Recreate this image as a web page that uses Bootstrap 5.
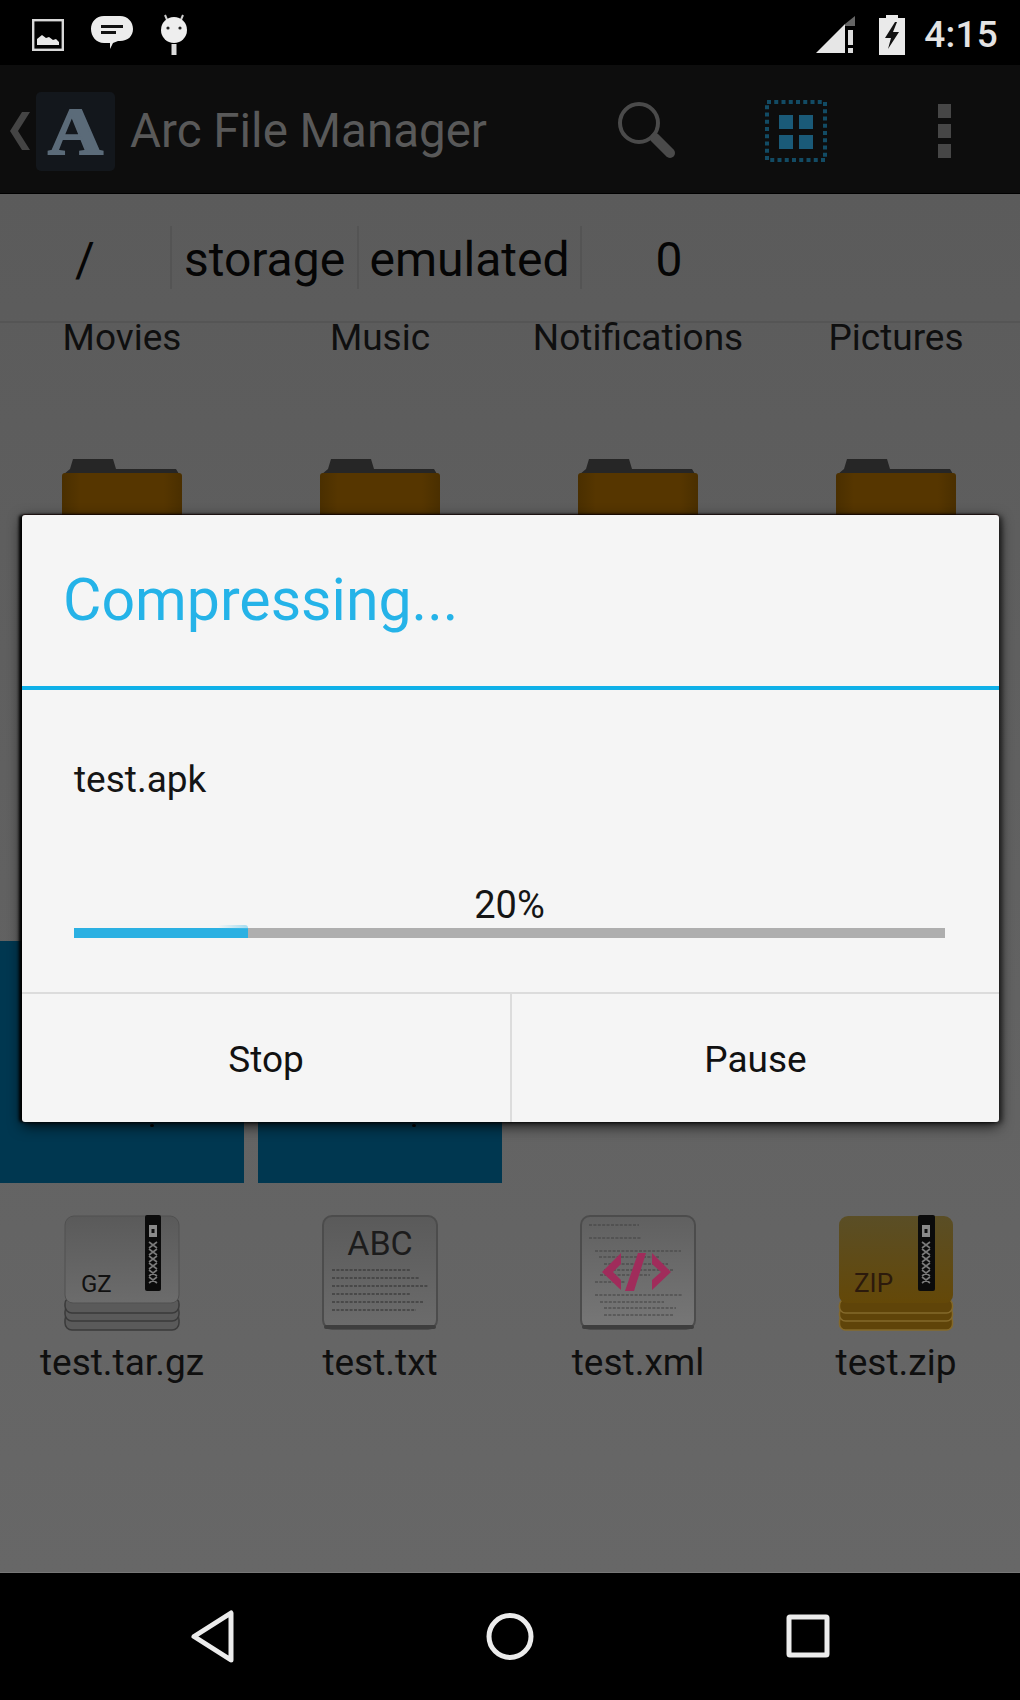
<!doctype html>
<html lang="en">
<head>
<meta charset="utf-8">
<title>Arc File Manager</title>
<link href="https://cdn.jsdelivr.net/npm/bootstrap@5.3.0/dist/css/bootstrap.min.css" rel="stylesheet">
<style>
html,body{margin:0;background:#000}
body{font-family:Roboto,"Liberation Sans",sans-serif}
.phone{width:1020px;height:1700px;overflow:hidden;background:#000}
.statusbar{height:65px;background:#000;padding:4px 22px 0 32px;flex:none}
.statusbar svg{display:block}
.st-chat{margin-left:26px}
.st-droid{margin-left:25px}
.st-batt{margin-left:20px}
.st-signal{margin-right:3px}
.clock{font-size:37px;font-weight:500;color:#e4e4e4;line-height:1;margin-left:19px;letter-spacing:.2px}
.actionbar{height:128px;background:#0d0d0d;flex:none;padding-top:4px}
.logo-tile{width:79px;height:79px;background:#13171c;border-radius:5px;margin-left:6px;color:#5b6b79;font-family:"Liberation Serif",serif;font-weight:700;font-size:68px;line-height:78px;text-align:center;-webkit-text-stroke:2px #5b6b79}
.logo-glyph{display:inline-block;transform:scaleX(1.12)}
.app-title{font-size:47.5px;color:#595959;line-height:1;margin-left:15px;margin-top:2px}
.chev{margin-left:10px}
.act-search{margin-left:130px}
.act-grid{margin-left:88px}
.act-more{margin-left:111px}
.screen{height:1379px;background:linear-gradient(#5b5b5b,#676767);border-top:1px solid #000;overflow:hidden}
.crumbs{height:129px;border-bottom:2px solid #555;padding-top:32px;font-size:48px;color:#050505}
.crumb{height:63px;line-height:67px;text-align:center;border-right:2px solid #545454;flex:none}
.crumb:last-child{border-right:0}
.c1{width:172px}.c2{width:187px}.c3{width:223px}.c4{width:174px}
.file-grid{display:grid;grid-template-columns:repeat(4,244px);column-gap:14px;row-gap:14px}
.cell{height:242px;display:flex;flex-direction:column;align-items:center;position:relative;font-size:37px;color:#0f0f0f;line-height:40px}
.cell-top{height:92px;justify-content:flex-start;line-height:30px}
.cell-top span{white-space:nowrap}
.cell-folder{padding-top:30px}
.cell-file{padding-top:18px}
.cell-file .fname{margin-top:12px}
.cell-on{background:#003750}
.speck{position:absolute;top:183px;width:4px;height:3px;background:#000;border-radius:50%}
.s1{left:150px}.s2{left:154px}
.navbar-sys{height:128px;background:#000;border-top:1px solid #777;flex:none}
.dialog-wrap{position:absolute;left:22px;top:515px;width:977px;height:607px;background:#f5f5f5;border-radius:3px;box-shadow:-3px 0 3px #000,0 4px 14px rgba(0,0,0,.75),3px 1px 5px rgba(0,0,0,.5),0 -1px 1px rgba(40,0,0,.6)}
.dlg-title{height:175px;padding-left:41px;padding-top:45px;font-size:59px;line-height:80px;color:#25b3e8;border-bottom:4px solid #0fb0e8}
.dlg-body{height:304px;padding:68px 54px 0 52px;font-size:37px;color:#151515;line-height:44px;border-bottom:2px solid #dcdcdc}
.pct{margin-top:81px;text-align:center;line-height:44px;height:44px;font-size:38px}
.bar-track{height:10px;border-radius:0;background:#aeaeae;margin-top:1px;overflow:visible}
.bar-fill{background:#2bb0e2;overflow:visible;position:relative}
.bar-fill::after{content:"";position:absolute;right:0;top:-3px;width:30px;height:4px;background:linear-gradient(90deg,rgba(43,176,226,0),rgba(80,195,235,.5));border-radius:3px 3px 0 0}
.dlg-btn{flex:1 1 0;height:128px;border:0;border-radius:0;font-size:37px;color:#111;background:transparent;line-height:1;padding-top:8px}
.dlg-btn:first-child{flex:0 0 490px;border-right:2px solid #dcdcdc}
</style>
</head>
<body>
<div class="phone position-relative d-flex flex-column">

  <div class="statusbar d-flex align-items-center">
    <svg width="32" height="32" viewBox="0 0 32 32"><rect x="1.2" y="1.2" width="29.6" height="29.6" fill="none" stroke="#d8d8d8" stroke-width="2.4"/><path d="M5 26V20l5-4 4 3 3-1 4 3 3-1 3 3v3z" fill="#e8e8e8"/></svg>
    <svg class="st-chat" width="44" height="40" viewBox="0 0 44 40"><path d="M14 1h16c8 0 13 6 13 13s-5 12-13 12h-2l-5 2-3 6v-6H14C6 28 1 21 1 14S6 1 14 1z" fill="#ececec"/><rect x="11" y="10" width="22" height="3" fill="#111"/><rect x="11" y="16" width="15" height="3" fill="#111"/></svg>
    <svg class="st-droid" width="30" height="42" viewBox="0 0 30 42"><path d="M6 1l3 7M24 1l-3 7" stroke="#ccc" stroke-width="2"/><circle cx="15" cy="16" r="13" fill="#eee"/><circle cx="9" cy="14" r="1.6" fill="#222"/><circle cx="21" cy="14" r="1.6" fill="#222"/><rect x="12.5" y="30" width="5" height="11" fill="#ddd"/></svg>
    <div class="flex-grow-1"></div>
    <svg class="st-signal" width="40" height="38" viewBox="0 0 40 38"><path d="M0 37L29 8v29z" fill="#e6e6e6"/><path d="M29 8L39 0v10H29z" fill="#666"/><rect x="32" y="14" width="5" height="15" fill="#ddd"/><rect x="32" y="32" width="5" height="5" fill="#ddd"/></svg>
    <svg class="st-batt" width="26" height="40" viewBox="0 0 26 40"><path d="M7 0h12v3h7v37H0V3h7z" fill="#eaeaea"/><path d="M16 7L6 23h6l-3 11 11-17h-6l4-10z" fill="#111"/></svg>
    <div class="clock">4:15</div>
  </div>

  <div class="actionbar d-flex align-items-center">
    <svg class="chev" width="20" height="38" viewBox="0 0 20 38"><path d="M20 0L8 19l12 19h-8L0 19 12 0z" fill="#444"/></svg>
    <div class="logo-tile"><span class="logo-glyph">A</span></div>
    <div class="app-title">Arc File Manager</div>
    <svg class="act-search" width="60" height="60" viewBox="0 0 60 60"><circle cx="22" cy="22" r="19" fill="none" stroke="#4a4a4a" stroke-width="4"/><path d="M38 37l15 15" stroke="#4a4a4a" stroke-width="10" stroke-linecap="round"/></svg>
    <svg class="act-grid" width="62" height="62" viewBox="0 0 62 62"><rect x="2" y="2" width="58" height="58" fill="none" stroke="#124b64" stroke-width="4" stroke-dasharray="4 3.25"/><g fill="#1a5a78"><rect x="14" y="15" width="14" height="14"/><rect x="34" y="15" width="14" height="14"/><rect x="14" y="35" width="14" height="14"/><rect x="34" y="35" width="14" height="14"/></g></svg>
    <svg class="act-more" width="13" height="54" viewBox="0 0 13 54"><g fill="#464646"><rect width="13" height="14"/><rect y="20" width="13" height="14"/><rect y="40" width="13" height="14"/></g></svg>
  </div>

  <div class="screen">
    <div class="crumbs d-flex">
      <div class="crumb c1">/</div>
      <div class="crumb c2">storage</div>
      <div class="crumb c3">emulated</div>
      <div class="crumb c4">0</div>
    </div>
    <div class="file-grid">
      <div class="cell cell-top"><span>Movies</span></div>
      <div class="cell cell-top"><span>Music</span></div>
      <div class="cell cell-top"><span>Notifications</span></div>
      <div class="cell cell-top"><span>Pictures</span></div>

      <div class="cell cell-folder"><svg width="122" height="110" viewBox="0 0 122 110"><use href="#folder"/></svg></div>
      <div class="cell cell-folder"><svg width="122" height="110" viewBox="0 0 122 110"><use href="#folder"/></svg></div>
      <div class="cell cell-folder"><svg width="122" height="110" viewBox="0 0 122 110"><use href="#folder"/></svg></div>
      <div class="cell cell-folder"><svg width="122" height="110" viewBox="0 0 122 110"><use href="#folder"/></svg></div>

      <div class="cell"></div><div class="cell"></div><div class="cell"></div><div class="cell"></div>

      <div class="cell cell-on"><i class="speck s1"></i></div>
      <div class="cell cell-on"><i class="speck s2"></i></div>
      <div class="cell"></div><div class="cell"></div>

      <div class="cell cell-file">
        <svg width="116" height="116" viewBox="0 0 116 116"><use href="#stack"/><rect x="81" y="0" width="16" height="76" rx="2" fill="#0b0b0b"/><use href="#zip-teeth" x="81"/><text x="17" y="77" font-family="Roboto,sans-serif" font-size="24" fill="#111">GZ</text></svg>
        <div class="fname">test.tar.gz</div>
      </div>
      <div class="cell cell-file">
        <svg width="116" height="116" viewBox="0 0 116 116"><rect x="1" y="1" width="114" height="113" rx="9" fill="url(#gray)" stroke="#4c4c4c" stroke-width="2"/><rect x="2" y="110" width="112" height="4" rx="2" fill="#3e3e3e"/><text x="58" y="40" text-anchor="middle" font-family="Roboto,sans-serif" font-size="34" fill="#1c1c1c">ABC</text><g stroke="#333" stroke-width="1.6" stroke-dasharray="3 1.4" opacity=".75"><path d="M10 55h78M10 63h88M10 71h96M10 79h78M10 87h92M10 95h84"/></g></svg>
        <div class="fname">test.txt</div>
      </div>
      <div class="cell cell-file">
        <svg width="116" height="116" viewBox="0 0 116 116"><rect x="1" y="1" width="114" height="113" rx="9" fill="url(#gray2)" stroke="#4c4c4c" stroke-width="2"/><rect x="2" y="110" width="112" height="4" rx="2" fill="#3e3e3e"/><g stroke="#444" stroke-width="1.4" stroke-dasharray="3 1.4" opacity=".7"><path d="M9 10h50M9 23h52M15 36h86M19 42h60M24 49h64M24 55h70M20 60h50M15 67h30M15 80h88M20 87h64M24 93h72M24 100h70"/></g><g fill="#a02c5b"><path d="M22 57l19-19v11L33 57l8 8v10zM72 38l19 19-19 18V65l9-8-9-8z"/><path d="M58 38h8L54 76h-9z"/></g></svg>
        <div class="fname">test.xml</div>
      </div>
      <div class="cell cell-file">
        <svg width="116" height="116" viewBox="0 0 116 116"><g fill="#5f4409" stroke="#84692b" stroke-width="1.5"><rect x="1.5" y="100" width="113" height="15" rx="6"/><rect x="1.5" y="92" width="113" height="14" rx="6"/><rect x="1.5" y="84" width="113" height="14" rx="6"/></g><path d="M1 10a9 9 0 0 1 9-9h96a9 9 0 0 1 9 9v70a8 8 0 0 1-8 8H9a8 8 0 0 1-8-8z" fill="url(#gold)"/><rect x="80" y="0" width="17" height="76" rx="2" fill="#0b0b0b"/><use href="#zip-teeth" x="80"/><text x="16" y="77" font-family="Roboto,sans-serif" font-size="26" fill="#2c1a0c">ZIP</text></svg>
        <div class="fname">test.zip</div>
      </div>
    </div>
  </div>

  <div class="navbar-sys d-flex">
    <svg class="d-block" width="1020" height="127" viewBox="0 0 1020 127"><g fill="none" stroke="#ececec" stroke-width="5" stroke-linejoin="round"><path d="M231 40V87L194 63.5z"/><circle cx="510" cy="63.5" r="21"/><rect x="789" y="44" width="38" height="38" rx="1"/></g></svg>
  </div>

  <div class="dialog-wrap">
    <div class="dlg-title">Compressing...</div>
    <div class="dlg-body">
      <div>test.apk</div>
      <div class="pct">20%</div>
      <div class="progress bar-track" role="progressbar" aria-valuenow="20" aria-valuemin="0" aria-valuemax="100">
        <div class="progress-bar bar-fill" style="width:20%"></div>
      </div>
    </div>
    <div class="d-flex">
      <button type="button" class="btn dlg-btn">Stop</button>
      <button type="button" class="btn dlg-btn">Pause</button>
    </div>
  </div>

  <svg width="0" height="0" class="position-absolute">
    <defs>
      <linearGradient id="gray" x1="0" y1="0" x2="0" y2="1"><stop offset="0" stop-color="#5a5a5a"/><stop offset="1" stop-color="#6c6c6c"/></linearGradient>
      <linearGradient id="gray2" x1="0" y1="0" x2="0" y2="1"><stop offset="0" stop-color="#606060"/><stop offset="1" stop-color="#777"/></linearGradient>
      <linearGradient id="gold" x1="0" y1="0" x2="0" y2="1"><stop offset="0" stop-color="#5a4e26"/><stop offset="1" stop-color="#644808"/></linearGradient>
      <linearGradient id="fold" x1="0" y1="0" x2="1" y2="0"><stop offset="0" stop-color="#4a2f00"/><stop offset=".15" stop-color="#563600"/><stop offset=".85" stop-color="#563600"/><stop offset="1" stop-color="#4a2f00"/></linearGradient>
      <g id="folder"><path d="M12 0h40l3 10h60l3 5H3l6-5z" fill="#262626"/><path d="M4 14h114a3 3 0 0 1 3 3v93H1V17a3 3 0 0 1 3-3z" fill="url(#fold)"/></g>
      <g id="stack"><g fill="#5a5a5a" stroke="#3a3a3a" stroke-width="1.5"><rect x="1" y="98" width="114" height="17" rx="7"/><rect x="1" y="90" width="114" height="16" rx="7"/><rect x="1" y="82" width="114" height="16" rx="7"/></g><path d="M1 10a9 9 0 0 1 9-9h96a9 9 0 0 1 9 9v70a8 8 0 0 1-8 8H9a8 8 0 0 1-8-8z" fill="url(#gray)" stroke="#505050"/></g>
      <g id="zip-teeth"><rect x="4" y="10" width="8" height="12" fill="#8a8a8a"/><rect x="6.5" y="14" width="3" height="4" fill="#111"/><path d="M4 27l8 6M12 27l-8 6M4 34l8 6M12 34l-8 6M4 41l8 6M12 41l-8 6M4 48l8 6M12 48l-8 6M4 55l8 6M12 55l-8 6M4 62l8 6M12 62l-8 6" stroke="#7a7a7a" stroke-width="1.6" fill="none"/></g>
    </defs>
  </svg>
</div>
</body>
</html>
